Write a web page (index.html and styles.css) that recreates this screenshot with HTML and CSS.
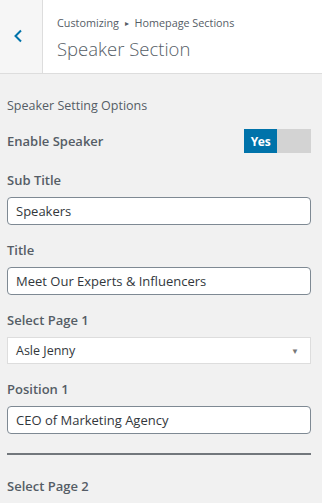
FILE: index.html
```html
<!DOCTYPE html>
<html lang="en">
<head>
    <meta charset="UTF-8">
    <meta name="viewport" content="width=device-width, initial-scale=1.0">
    <title>Customizing - Speaker Section</title>
    <link rel="stylesheet" href="styles.css">
</head>
<body>
    <div class="panel">
        <div class="panel-header">
            <a href="#" class="back-button">
                <svg viewBox="0 0 12 14" width="12" height="14">
                    <path fill="none" stroke="currentColor" stroke-width="2" d="M9 1.5L3.5 7 9 12.5"/>
                </svg>
            </a>
            <div class="panel-title">
                <div class="crumbs">Customizing <span class="crumb-sep">&#9656;</span> Homepage Sections</div>
                <div class="section-name">Speaker Section</div>
            </div>
        </div>

        <div class="controls">
            <div class="group-heading">Speaker Setting Options</div>

            <!-- toggle -->
            <div class="control toggle-row">
                <span class="control-label">Enable Speaker</span>
                <div class="toggle">
                    <span class="toggle-on">Yes</span>
                    <span class="toggle-off"></span>
                </div>
            </div>

            <div class="control">
                <label class="control-label">Sub Title</label>
                <input class="text-input" type="text" value="Speakers">
            </div>

            <div class="control">
                <label class="control-label">Title</label>
                <input class="text-input" type="text" value="Meet Our Experts &amp; Influencers">
            </div>

            <div class="control">
                <label class="control-label">Select Page 1</label>
                <div class="select-box">
                    <span>Asle Jenny</span>
                    <span class="select-arrow">&#9660;</span>
                </div>
            </div>

            <div class="control">
                <label class="control-label">Position 1</label>
                <input class="text-input" type="text" value="CEO of Marketing Agency">
            </div>

            <hr class="divider">

            <div class="control">
                <label class="control-label">Select Page 2</label>
                <div class="select-box"></div>
            </div>
        </div>
    </div>
</body>
</html>
```

FILE: styles.css
```css
* {
    margin: 0;
    padding: 0;
    box-sizing: border-box;
    font-family: "Open Sans", "Noto Sans", Arial, sans-serif;
}

body {
    background: #f1f1f1;
    color: #555d66;
    overflow: hidden;
}

.panel {
    width: 100%;
}

.panel-header {
    display: flex;
    height: 74px;
    background: #fff;
    border-bottom: 1px solid #ddd;
}

.back-button {
    width: 43px;
    display: flex;
    align-items: center;
    justify-content: center;
    background: #f6f6f6;
    border-right: 1px solid #ddd;
    color: #0073aa;
    padding: 0 7px 2px 0;
}

.panel-title {
    padding: 12px 0 0 14px;
}

.crumbs {
    font-size: 10.8px;
    line-height: 22px;
    color: #555d66;
}

.crumb-sep {
    font-size: 8px;
    padding: 0 3px;
    vertical-align: 1px;
}

.section-name {
    font-size: 18.5px;
    font-weight: 300;
    line-height: 30px;
    color: #555d66;
}

.controls {
    padding: 22px 11px 0 7px;
}

.group-heading {
    font-size: 12.5px;
    line-height: 20px;
    margin-bottom: 13px;
}

.control {
    margin-bottom: 15px;
}

.control-label {
    display: block;
    font-size: 13px;
    font-weight: 600;
    line-height: 20px;
    margin-bottom: 7px;
}

.toggle-row {
    display: flex;
    align-items: center;
    justify-content: space-between;
    margin-bottom: 17px;
}

.toggle-row .control-label {
    margin-bottom: 0;
}

.toggle {
    display: flex;
    width: 67px;
    height: 24px;
}

.toggle-on {
    width: 33px;
    background: #0073aa;
    color: #fff;
    font-size: 12px;
    font-weight: 700;
    display: flex;
    align-items: center;
    justify-content: center;
    letter-spacing: -0.3px;
}

.toggle-off {
    flex: 1;
    background: #d3d3d3;
}

.text-input {
    display: block;
    width: 100%;
    height: 28px;
    padding: 0 8px;
    border: 1px solid #7e8993;
    border-radius: 4px;
    background: #fff;
    color: #32373c;
    font-size: 13px;
}

.select-box {
    display: flex;
    align-items: center;
    justify-content: space-between;
    height: 27px;
    padding: 0 8px;
    background: #fff;
    border: 1px solid #ddd;
    color: #32373c;
    font-size: 12.5px;
}

.select-arrow {
    font-size: 8px;
    color: #777;
    padding-right: 3px;
}

/* control margin collapses into this one */
.divider {
    border: none;
    height: 2px;
    background: #72777c;
    margin: 19px 0 21px;
}
```
